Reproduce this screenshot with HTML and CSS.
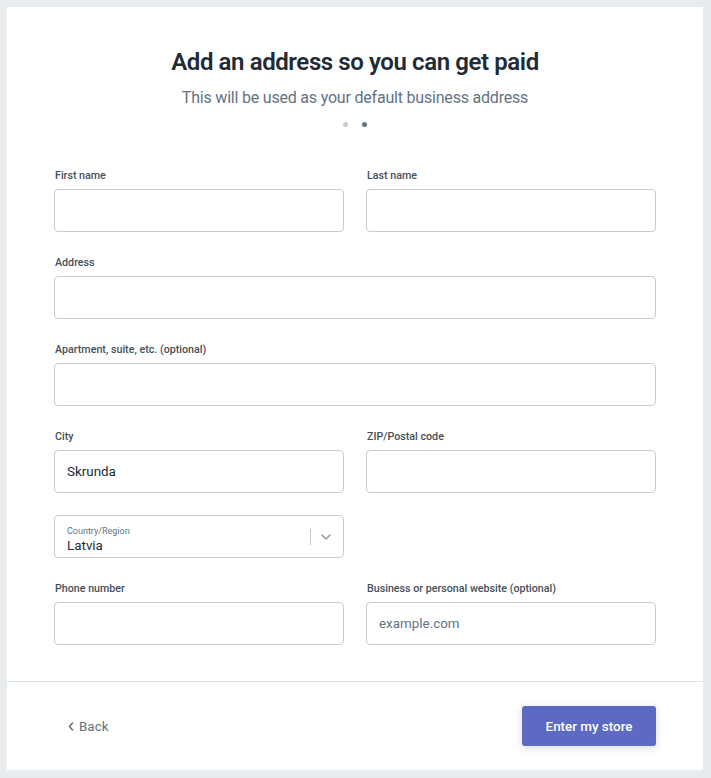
FILE: index.html
```html
<!DOCTYPE html>
<html lang="en">
<head>
<meta charset="utf-8">
<title>Add an address</title>
<link rel="stylesheet" href="styles.css">
</head>
<body>
<div class="card">
  <header class="header">
    <h1 class="title">Add an address so you can get paid</h1>
    <p class="subtitle">This will be used as your default business address</p>
    <div class="dots"><span class="dot"></span><span class="dot dot-active"></span></div>
  </header>
  <form class="form">
    <div class="row two">
      <div class="field"><label class="label">First name</label><div class="input"></div></div>
      <div class="field"><label class="label">Last name</label><div class="input"></div></div>
    </div>
    <div class="row">
      <div class="field"><label class="label">Address</label><div class="input"></div></div>
    </div>
    <div class="row">
      <div class="field"><label class="label">Apartment, suite, etc. (optional)</label><div class="input"></div></div>
    </div>
    <div class="row two">
      <div class="field"><label class="label">City</label><div class="input">Skrunda</div></div>
      <div class="field"><label class="label">ZIP/Postal code</label><div class="input"></div></div>
    </div>
    <div class="row two">
      <div class="select">
        <div class="select-text">
          <span class="select-label">Country/Region</span>
          <span class="select-value">Latvia</span>
        </div>
        <span class="select-divider"></span>
        <svg class="chevron" width="10" height="6" viewBox="0 0 10 6"><path d="M1 1l4 4 4-4" fill="none" stroke="#919eab" stroke-width="1.5" stroke-linecap="round" stroke-linejoin="round"/></svg>
      </div>
      <div></div>
    </div>
    <div class="row two">
      <div class="field"><label class="label">Phone number</label><div class="input"></div></div>
      <div class="field"><label class="label">Business or personal website (optional)</label><div class="input placeholder">example.com</div></div>
    </div>
  </form>
  <footer class="footer">
    <a class="back"><svg width="6" height="9" viewBox="0 0 6 9"><path d="M4.5 1L1.5 4.5 4.5 8" fill="none" stroke="#637381" stroke-width="1.6" stroke-linecap="round" stroke-linejoin="round"/></svg>Back</a>
    <button class="primary" type="button">Enter my store</button>
  </footer>
</div>
</body>
</html>
```

FILE: styles.css
```css
html, body {
  margin: 0;
  padding: 0;
}
body {
  background: #e8ecef;
  font-family: Roboto, "Liberation Sans", sans-serif;
  color: #212b36;
  padding: 7px 8px 8px 7px;
  height: 778px;
  box-sizing: border-box;
}
.card {
  background: #fff;
  height: 763px;
  display: flex;
  flex-direction: column;
}
.header {
  padding-top: 39px;
  text-align: center;
}
.title {
  margin: 0;
  font-size: 24px;
  line-height: 32px;
  font-weight: 600;
  color: #212b36;
  letter-spacing: -0.4px;
}
.subtitle {
  margin: 8px 0 0;
  font-size: 16px;
  line-height: 24px;
  color: #637381;
  font-weight: 400;
  letter-spacing: -0.2px;
}
.dots {
  margin-top: 12px;
  display: flex;
  justify-content: center;
  gap: 14px;
  height: 6px;
}
.dot {
  width: 5px;
  height: 5px;
  border-radius: 50%;
  background: #c4cdd5;
}
.dot-active {
  background: #637381;
}
.form {
  padding: 39px 47px 36px 47px;
  display: flex;
  flex-direction: column;
  gap: 22px;
  flex: 1;
}
.row {
  display: grid;
  grid-template-columns: 1fr;
}
.row.two {
  grid-template-columns: 1fr 1fr;
  column-gap: 22px;
}
.field {
  display: flex;
  flex-direction: column;
}
.label {
  font-size: 10.7px;
  line-height: 16px;
  font-weight: 500;
  color: #454f5b;
  padding-top: 1px;
  margin-bottom: 5px;
  padding-left: 1px;
}
.input {
  height: 43px;
  box-sizing: border-box;
  border: 1px solid #c4cdd5;
  border-radius: 4px;
  padding: 0 12px;
  display: flex;
  align-items: center;
  font-size: 13.4px;
  color: #212b36;
}
.input.placeholder {
  color: #637381;
}
.select {
  height: 43px;
  box-sizing: border-box;
  border: 1px solid #c4cdd5;
  border-radius: 4px;
  padding: 5px 12px 0 12px;
  display: flex;
  align-items: center;
}
.select-text {
  flex: 1;
  display: flex;
  flex-direction: column;
}
.select-label {
  font-size: 9px;
  line-height: 12px;
  color: #637381;
}
.select-value {
  font-size: 13.4px;
  line-height: 17px;
  color: #212b36;
}
.select-divider {
  width: 1px;
  height: 16px;
  background: #c4cdd5;
  margin-right: 10px;
  margin-top: -5px;
}
.chevron {
  display: block;
  margin-top: -5px;
}
.footer {
  border-top: 1px solid #dfe3e8;
  padding: 24px 47px 24px 47px;
  display: flex;
  justify-content: space-between;
  align-items: center;
}
.back {
  display: flex;
  align-items: center;
  gap: 5px;
  font-size: 13.4px;
  color: #637381;
  padding-left: 14px;
}
.primary {
  width: 134px;
  height: 40px;
  border: 0;
  border-radius: 3px;
  background: #5c6ac4;
  color: #fff;
  font-family: inherit;
  font-size: 13.4px;
  font-weight: 500;
  box-shadow: 0 2px 8px rgba(0, 0, 0, 0.15);
}
```
